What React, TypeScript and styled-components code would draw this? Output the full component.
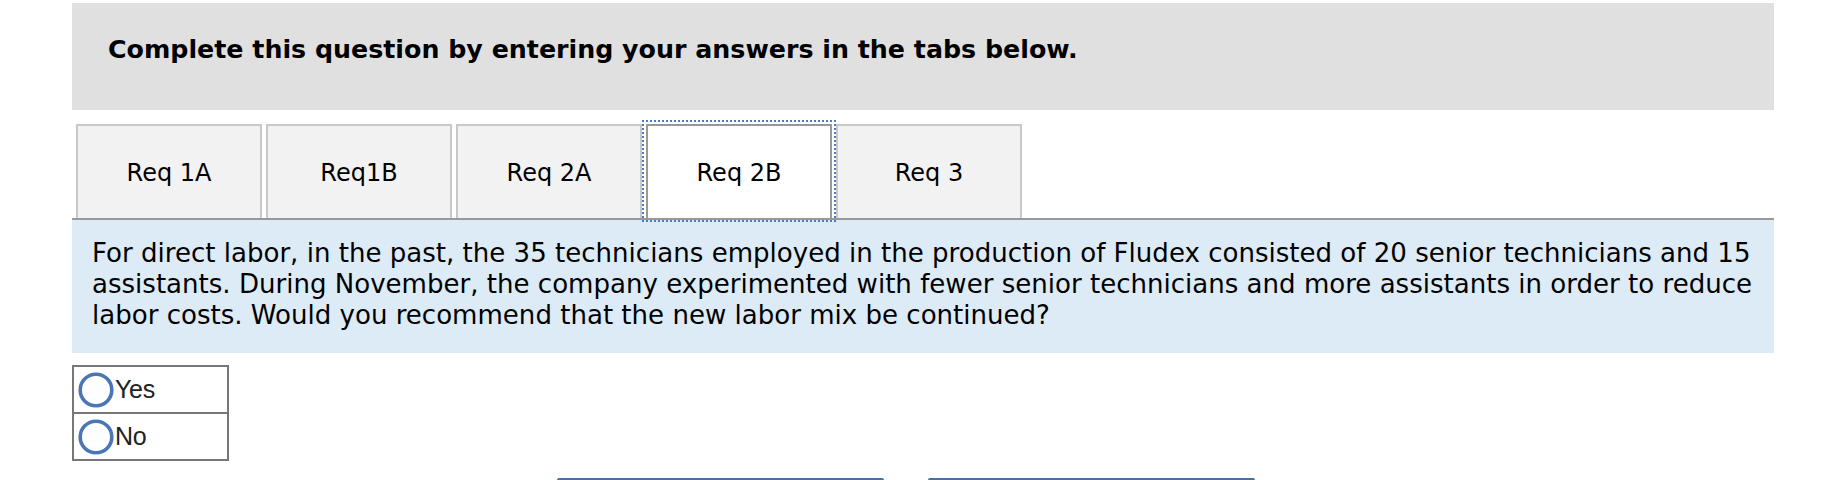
import React from "react";
import styled, { createGlobalStyle } from "styled-components";

const Global = createGlobalStyle`
  html, body { margin: 0; padding: 0; background: #ffffff; }
  body { font-family: Verdana, "DejaVu Sans", sans-serif; color: #000; }
`;

const Page = styled.div`
  width: 1702px;
  margin-left: 72px;
  padding-top: 3px;
`;

const Header = styled.div`
  box-sizing: border-box;
  height: 107px;
  background: #e0e0e0;
  padding: 32px 36px 0;
  font-family: Verdana, "DejaVu Sans", sans-serif;
  font-weight: bold;
  font-size: 25.3px;
  line-height: 29px;
`;

const TabBar = styled.div`
  display: flex;
  gap: 4px;
  margin-top: 14px;
  padding-left: 4px;
  border-bottom: 2px solid #999999;
`;

const Tab = styled.div<{ $active?: boolean }>`
  box-sizing: border-box;
  width: 186px;
  height: 94px;
  display: flex;
  align-items: center;
  justify-content: center;
  padding-top: 2px;
  background: ${(p) => (p.$active ? "#ffffff" : "#f2f2f2")};
  border: 2px solid ${(p) => (p.$active ? "#999999" : "#c8c8c8")};
  border-bottom: none;
  font-size: 24px;
  color: #000;
  ${(p) => (p.$active ? "outline: 2px dotted #4a7cc4; outline-offset: 2px; position: relative; z-index: 1;" : "")}
`;

const Prompt = styled.div`
  box-sizing: border-box;
  background: #ddebf7;
  padding: 18px 14px 20px 20px;
  font-size: 26.05px;
  line-height: 31px;
  height: 133px;
`;

const Choices = styled.table`
  margin-top: 12px;
  border-collapse: collapse;
  width: 157px;
`;

const ChoiceCell = styled.td`
  box-sizing: border-box;
  border: 2px solid #777777;
  height: 47px;
  padding: 0 0 0 4px;
`;

const ChoiceLabel = styled.label`
  display: flex;
  align-items: center;
  gap: 1px;
  font-family: "Liberation Sans", Arial, sans-serif;
  font-size: 25px;
  letter-spacing: -0.3px;
  color: #222;
`;

const Buttons = styled.div`
  display: flex;
  gap: 44px;
  margin-top: 17px;
  padding-left: 485px;
`;

const NavButton = styled.button`
  width: 327px;
  height: 44px;
  border: 2px solid #4a6fa5;
  border-radius: 2px;
  background: #ffffff;
`;

const Radio = () => (
  <svg width="36" height="36" viewBox="0 0 36 36">
    <circle cx="18" cy="18" r="15.8" fill="#fff" stroke="#4a76b8" strokeWidth="3.6" />
  </svg>
);

const tabs = ["Req 1A", "Req1B", "Req 2A", "Req 2B", "Req 3"];

export default function App() {
  return (
    <>
      <Global />
      <Page>
        <Header>Complete this question by entering your answers in the tabs below.</Header>
        <TabBar>
          {tabs.map((t) => (
            <Tab key={t} $active={t === "Req 2B"}>
              {t}
            </Tab>
          ))}
        </TabBar>
        <Prompt>
          For direct labor, in the past, the 35 technicians employed in the production of Fludex consisted of 20 senior
          technicians and 15 assistants. During November, the company experimented with fewer senior technicians and more
          assistants in order to reduce labor costs. Would you recommend that the new labor mix be continued?
        </Prompt>
        <Choices>
          <tbody>
            <tr>
              <ChoiceCell>
                <ChoiceLabel>
                  <Radio />
                  Yes
                </ChoiceLabel>
              </ChoiceCell>
            </tr>
            <tr>
              <ChoiceCell>
                <ChoiceLabel>
                  <Radio />
                  No
                </ChoiceLabel>
              </ChoiceCell>
            </tr>
          </tbody>
        </Choices>
        <Buttons>
          <NavButton />
          <NavButton />
        </Buttons>
      </Page>
    </>
  );
}
